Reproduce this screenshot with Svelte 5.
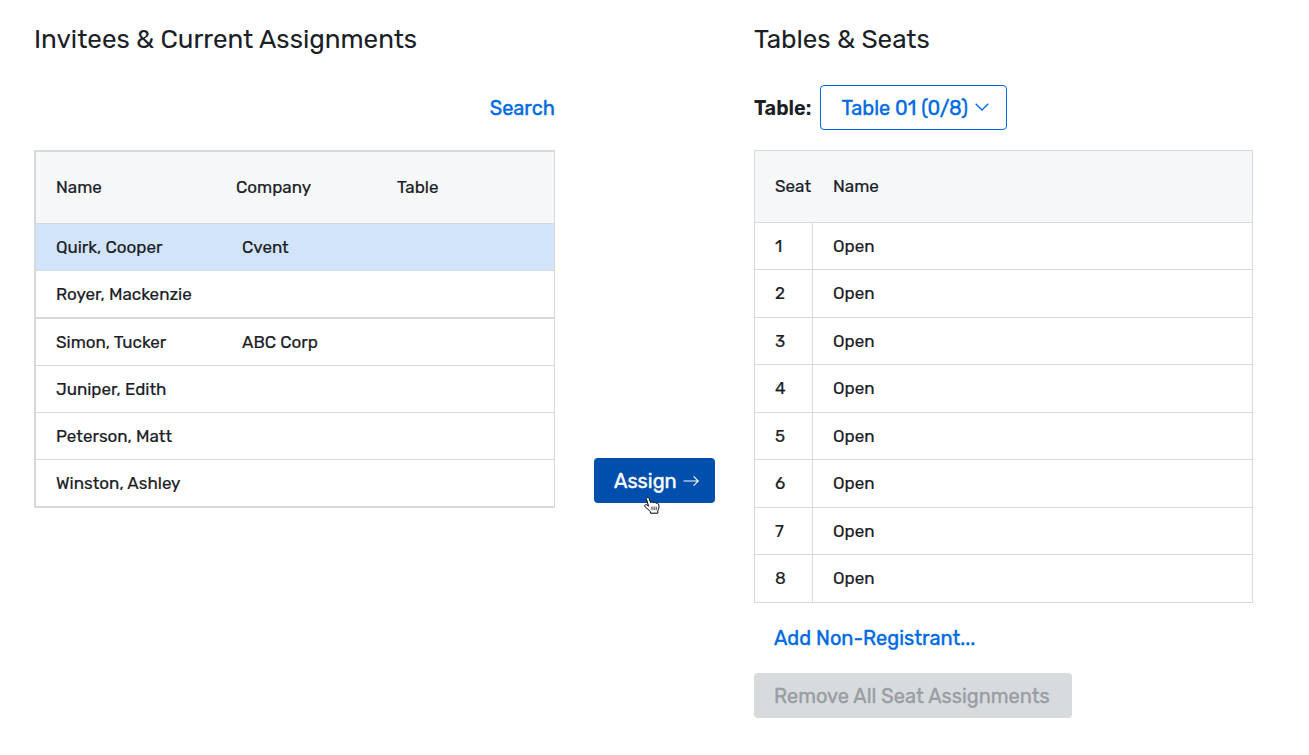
<script>
  const invitees = [
    { name: 'Quirk, Cooper', company: 'Cvent', table: '' },
    { name: 'Royer, Mackenzie', company: '', table: '' },
    { name: 'Simon, Tucker', company: 'ABC Corp', table: '' },
    { name: 'Juniper, Edith', company: '', table: '' },
    { name: 'Peterson, Matt', company: '', table: '' },
    { name: 'Winston, Ashley', company: '', table: '' }
  ];
  const seats = [1, 2, 3, 4, 5, 6, 7, 8];
  let selected = $state(0);
</script>

<main>
  <section>
    <h2>Invitees &amp; Current Assignments</h2>
    <div class="toolbar end">
      <a href="#search">Search</a>
    </div>
    <table class="invitees">
      <colgroup><col class="c-name" /><col class="c-company" /><col /></colgroup>
      <thead>
        <tr><th>Name</th><th>Company</th><th>Table</th></tr>
      </thead>
      <tbody>
        {#each invitees as person, i}
          <tr class:selected={i === selected} onclick={() => (selected = i)}>
            <td>{person.name}</td>
            <td>{person.company}</td>
            <td>{person.table}</td>
          </tr>
        {/each}
      </tbody>
    </table>
  </section>

  <div class="middle">
    <button class="assign">
      Assign
      <svg class="arrow" viewBox="0 0 16 12" aria-hidden="true"><path d="M0.5 6H15.3M10.6 1.3L15.3 6L10.6 10.7" /></svg>
      <svg class="pointer" viewBox="0 0 16 18" aria-hidden="true">
        <path d="M4.5 10.2L2.6 3.4C2.1 1.3 4.4 0.5 5.1 2.5L6.6 6.7C7 5.6 8.9 5.7 9.3 6.9C9.9 5.9 11.5 6.1 12 7.3C13.1 6.7 14.5 7.3 14.8 8.8C15.2 11.2 14.8 13 13.8 14.6V17.2H6.6V15.8C4.9 14.3 3.2 12.5 1.2 10.9C-0.2 9.3 1.6 8 3.1 9Z" />
        <path class="creases" d="M8 10.6V14.2M10.1 10.6V14.2M12.2 10.6V14.2" />
      </svg>
    </button>
  </div>

  <section>
    <h2>Tables &amp; Seats</h2>
    <div class="toolbar">
      <label for="table-select">Table:</label>
      <div class="picker">
        <select id="table-select">
          <option>Table 01 (0/8)</option>
        </select>
        <svg class="chevron" viewBox="0 0 14 8" aria-hidden="true"><path d="M0.7 0.7L7 7L13.3 0.7" /></svg>
      </div>
    </div>
    <table class="seats">
      <colgroup><col class="c-seat" /><col /></colgroup>
      <thead>
        <tr><th>Seat</th><th>Name</th></tr>
      </thead>
      <tbody>
        {#each seats as seat}
          <tr><td>{seat}</td><td>Open</td></tr>
        {/each}
      </tbody>
    </table>
    <div class="actions">
      <a href="#add">Add Non-Registrant...</a>
      <button class="remove" disabled>Remove All Seat Assignments</button>
    </div>
  </section>
</main>

<style>
  :global(body) {
    background: #fff;
  }
  main {
    display: grid;
    grid-template-columns: 521fr auto 499fr;
    column-gap: 39px;
    padding: 24px 56px 36px 34px;
    box-sizing: border-box;
    color: #1a2026;
    font-family: Rubik, Roboto, sans-serif;
    font-size: 17px;
  }
  h2 {
    margin: 0 0 29px;
    font-size: 26px;
    font-weight: 400;
    line-height: 32px;
    white-space: nowrap;
  }
  .toolbar {
    display: flex;
    align-items: center;
    gap: 9px;
    height: 45px;
    margin-bottom: 20px;
    font-size: 20px;
  }
  .end {
    justify-content: flex-end;
  }
  label {
    font-weight: 600;
  }
  a,
  select,
  button {
    -webkit-text-stroke: 0.4px currentColor;
  }
  a {
    color: #006ae1;
    font-size: 20px;
    font-weight: 400;
    line-height: 24px;
    text-decoration: none;
  }
  .picker {
    position: relative;
  }
  select {
    appearance: none;
    box-sizing: border-box;
    width: 187px;
    height: 45px;
    padding: 0 32px 0 20px;
    border: 1px solid #006ae1;
    border-radius: 4px;
    background: #fff;
    color: #006ae1;
    font: inherit;
    font-weight: 400;
  }
  .chevron {
    position: absolute;
    top: 18px;
    right: 18px;
    width: 14px;
    height: 8px;
    pointer-events: none;
    fill: none;
    stroke: #006ae1;
    stroke-width: 1.3;
  }
  table {
    width: 100%;
    table-layout: fixed;
    border-collapse: separate;
    border-spacing: 0;
    border: 1px solid #d6dadd;
    -webkit-text-stroke: 0.2px currentColor;
  }
  th,
  td {
    box-sizing: border-box;
    height: 47px;
    padding: 0 0 1px 20px;
    border-bottom: 1px solid #d6dadd;
    font-weight: 400;
    line-height: 20px;
    text-align: left;
    white-space: nowrap;
  }
  th {
    height: 72px;
    background: #f6f7f9;
  }
  tbody tr:last-child td {
    border-bottom: 0;
  }
  .invitees {
    border-width: 2px 1px 2px 2px;
  }
  .invitees tbody tr:last-child td {
    height: 46px;
  }
  .invitees tbody tr:nth-child(2) td {
    height: 48px;
    border-bottom-width: 2px;
  }
  .invitees td:nth-child(2) {
    padding-left: 26px;
  }
  .selected td {
    background: #d2e4fa;
  }
  .c-name {
    width: 180px;
  }
  .c-company {
    width: 161px;
  }
  .c-seat {
    width: 58px;
  }
  .seats tbody tr:nth-child(even) td {
    height: 48px;
  }
  .seats tbody tr:last-child td {
    height: 47px;
  }
  .seats td:first-child {
    border-right: 1px solid #d6dadd;
  }
  .middle {
    padding-top: 434px;
  }
  button {
    height: 45px;
    padding: 0 20px;
    border: 0;
    border-radius: 4px;
    font: inherit;
    font-size: 20px;
    font-weight: 400;
    white-space: nowrap;
  }
  .assign {
    position: relative;
    display: flex;
    align-items: center;
    justify-content: space-between;
    width: 121px;
    padding-right: 16px;
    background: #004fad;
    color: #fff;
    cursor: pointer;
  }
  .arrow {
    width: 16px;
    height: 12px;
    fill: none;
    stroke: #fff;
    stroke-width: 1.1;
  }
  .pointer {
    position: absolute;
    top: 38px;
    left: 50px;
    width: 16px;
    height: 18px;
    fill: #fff;
    stroke: #000;
    stroke-width: 1;
    stroke-linejoin: round;
  }
  .creases {
    stroke-width: 0.8;
  }
  .actions {
    display: flex;
    flex-direction: column;
    align-items: flex-start;
    gap: 23px;
    padding-top: 23px;
  }
  .actions a {
    padding-left: 20px;
  }
  .remove {
    min-width: 318px;
    background: #d7dbde;
    color: #9a9ea4;
    text-align: left;
  }
</style>
